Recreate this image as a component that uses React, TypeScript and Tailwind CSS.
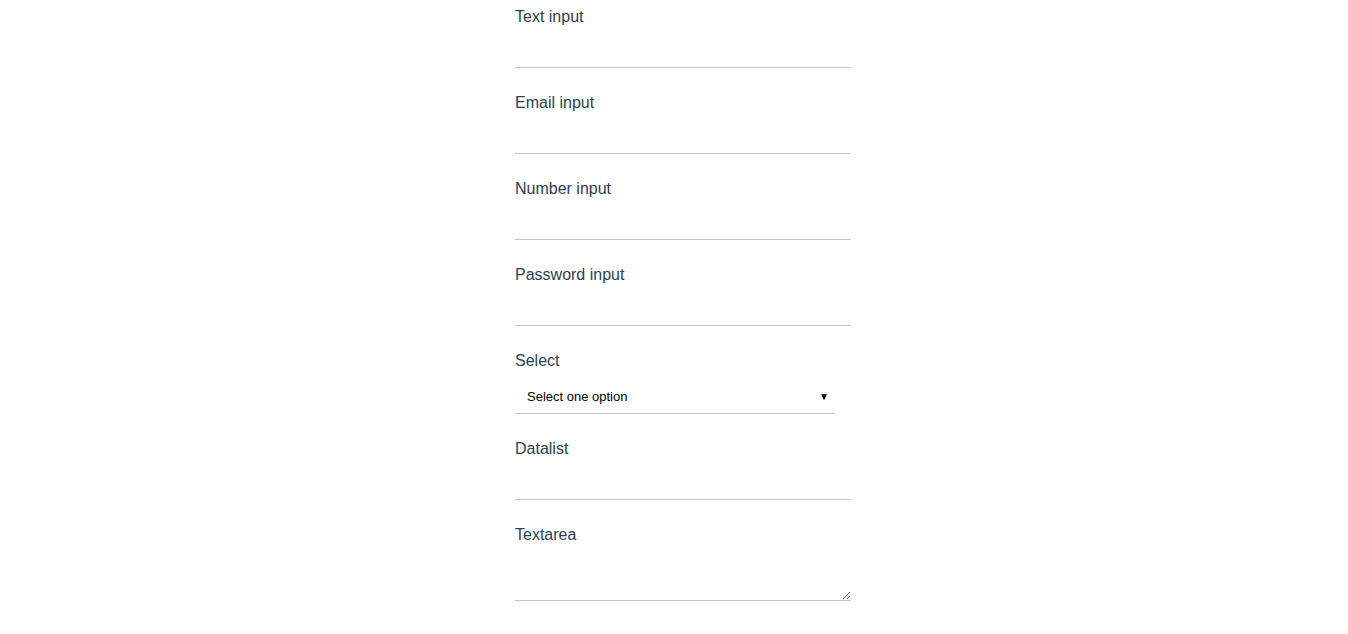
import React from 'react';

const labelCls = 'block pt-px text-[16px] leading-[18px] text-[#2c3e50]';
const inputCls =
  'block w-full h-[42px] bg-transparent border-0 border-b border-[#c4c4c4] outline-none text-[14px] text-[#2c3e50] px-0';

const Field = ({ label, type }: { label: string; type: string }) => (
  <div className="mb-[25px]">
    <label className={labelCls}>{label}</label>
    <input type={type} className={inputCls} />
  </div>
);

export default function App() {
  return (
    <div className="min-h-screen bg-white font-['Liberation_Sans',Arial,sans-serif]">
      <form className="mx-auto w-[354px] pl-[18px] pt-[7px]">
        <Field label="Text input" type="text" />
        <Field label="Email input" type="email" />
        <Field label="Number input" type="number" />
        <Field label="Password input" type="password" />

        {/* select */}
        <div className="mb-[25px]">
          <label className={labelCls}>Select</label>
          <div className="relative w-[320px]">
            <select
              defaultValue=""
              className="block w-full h-[44px] appearance-none bg-transparent border-0 border-b border-[#c4c4c4] outline-none pl-[12px] pt-[11px] text-[13px] text-black"
            >
              <option value="" disabled>
                Select one option
              </option>
              <option>Option 1</option>
              <option>Option 2</option>
            </select>
            <span className="pointer-events-none absolute right-[6px] top-[22px] text-[10px] leading-none text-black">
              ▼
            </span>
          </div>
        </div>

        {/* datalist */}
        <div className="mb-[25px]">
          <label className={labelCls}>Datalist</label>
          <input list="opts" className={inputCls} />
          <datalist id="opts">
            <option value="One" />
            <option value="Two" />
          </datalist>
        </div>

        <div>
          <label className={labelCls}>Textarea</label>
          <textarea className="block w-full h-[57px] bg-transparent border-0 border-b border-[#c4c4c4] outline-none resize px-0" />
        </div>
      </form>
    </div>
  );
}
